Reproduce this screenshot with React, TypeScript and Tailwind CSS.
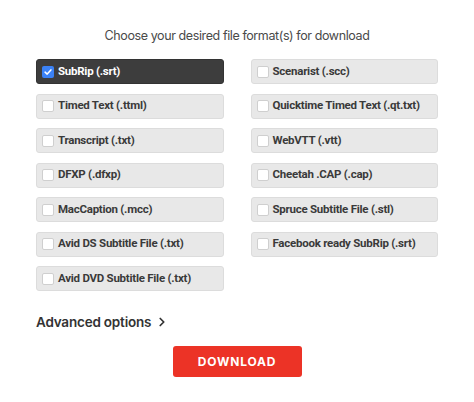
import { ChevronRight } from 'lucide-react'

const formats: [string, string][] = [
  ['SubRip (.srt)', 'Scenarist (.scc)'],
  ['Timed Text (.ttml)', 'Quicktime Timed Text (.qt.txt)'],
  ['Transcript (.txt)', 'WebVTT (.vtt)'],
  ['DFXP (.dfxp)', 'Cheetah .CAP (.cap)'],
  ['MacCaption (.mcc)', 'Spruce Subtitle File (.stl)'],
  ['Avid DS Subtitle File (.txt)', 'Facebook ready SubRip (.srt)'],
  ['Avid DVD Subtitle File (.txt)', ''],
]

function Option({ label, checked }: { label: string; checked?: boolean }) {
  return (
    <div
      className={`h-[25px] flex items-center gap-[4px] pl-[5px] rounded-[3px] border ${
        checked ? 'bg-[#3d3d3d] border-[#333] text-white' : 'bg-[#e8e8e8] border-[#dcdcdc] text-[#3a3a3a]'
      }`}
    >
      {checked ? (
        <span className="w-[12px] h-[12px] shrink-0 rounded-[2px] bg-[#3b82f6] flex items-center justify-center">
          <svg viewBox="0 0 12 12" className="w-[10px] h-[10px]">
            <path d="M2.5 6.2 L5 8.5 L9.5 3.5" stroke="white" strokeWidth="1.8" fill="none" strokeLinecap="round" strokeLinejoin="round" />
          </svg>
        </span>
      ) : (
        <span className="w-[12px] h-[12px] shrink-0 rounded-[2px] bg-white border border-[#cfcfcf]" />
      )}
      <span className="font-['Roboto',sans-serif] text-[11.5px] font-bold leading-none tracking-[-0.25px] whitespace-nowrap">
        {label}
      </span>
    </div>
  )
}

export default function App() {
  return (
    <div className="w-[474px] h-[402px] bg-white font-['Inter',sans-serif] pt-[28px] px-[36px]">
      <p className="text-center text-[12.5px] tracking-[-0.4px] text-[#4a4a4a] leading-[16px]">
        Choose your desired file format(s) for download
      </p>
      <div className="mt-[15px] grid grid-cols-2 gap-x-[27px] gap-y-[9.5px]">
        {formats.map(([a, b], i) => (
          <>
            <Option key={a} label={a} checked={i === 0} />
            {b ? <Option key={b} label={b} /> : <div key={'e' + i} />}
          </>
        ))}
      </div>
      <div className="mt-[23px] flex items-center gap-[4px] text-[#333] text-[13.5px] tracking-[-0.2px] font-semibold leading-[16px]">
        Advanced options
        <ChevronRight className="w-[14px] h-[14px]" strokeWidth={3} />
      </div>
      <div className="mt-[16px] flex justify-center">
        <button className="w-[129px] h-[31px] rounded-[3px] bg-[#ec3326] text-white text-[12px] font-bold tracking-[0.8px]">
          DOWNLOAD
        </button>
      </div>
    </div>
  )
}
